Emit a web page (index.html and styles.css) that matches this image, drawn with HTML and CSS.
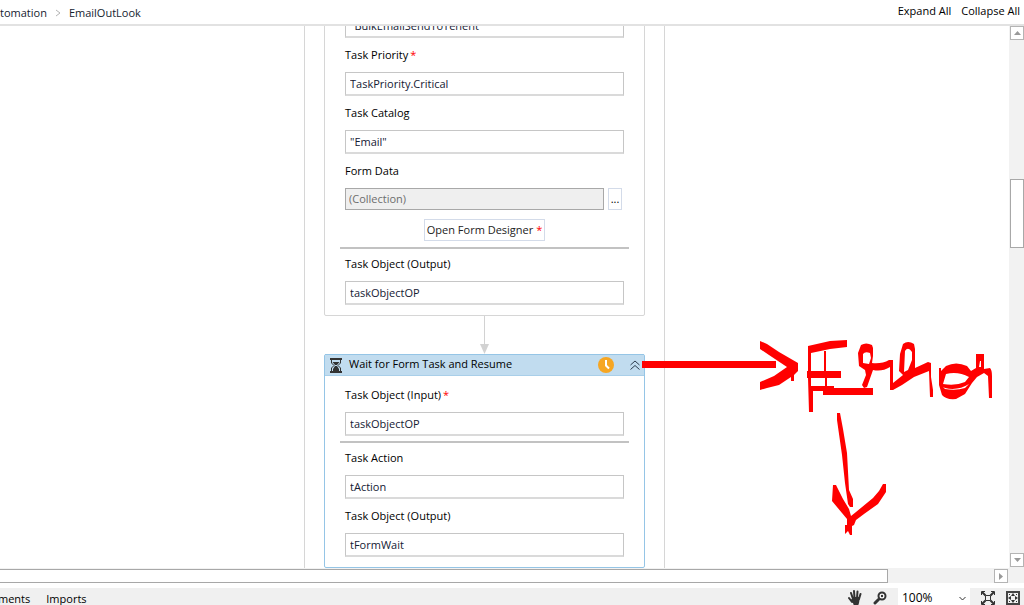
FILE: index.html
```
<!DOCTYPE html>
<html lang="en">
<head>
    <meta charset="UTF-8">
    <meta name="viewport" content="width=device-width, initial-scale=1.0">
    <title>EmailOutLook</title>
    <link rel="stylesheet" href="styles.css">
</head>
<body>
<header class="topbar">
    <nav class="breadcrumb">
        <a href="#">tomation</a>
        <svg class="crumb-arrow" width="6" height="8" viewBox="0 0 6 8"><path d="M1 1l4 3-4 3"/></svg>
        <a href="#">EmailOutLook</a>
    </nav>
    <div class="topbar-actions">
        <button type="button">Expand All</button>
        <button type="button">Collapse All</button>
    </div>
</header>

<div class="designer">
    <main class="canvas">
        <div class="sequence">
            <!-- Create form task -->
            <section class="activity activity-create">
                <div class="field">
                    <input type="text" aria-label="Task Title" value="&quot;BulkEmailSendToTenent&quot;">
                </div>
                <div class="field">
                    <label for="taskPriority">Task Priority<span class="required">*</span></label>
                    <input type="text" id="taskPriority" value="TaskPriority.Critical">
                </div>
                <div class="field">
                    <label for="taskCatalog">Task Catalog</label>
                    <input type="text" id="taskCatalog" value="&quot;Email&quot;">
                </div>
                <div class="field">
                    <label for="formData">Form Data</label>
                    <div class="browse-row">
                        <input type="text" id="formData" class="collection" value="(Collection)" disabled>
                        <button type="button" class="btn btn-browse">...</button>
                    </div>
                </div>
                <button type="button" class="btn btn-designer">Open Form Designer <span class="required">*</span></button>
                <hr>
                <div class="field">
                    <label for="createOutput">Task Object (Output)</label>
                    <input type="text" id="createOutput" value="taskObjectOP">
                </div>
            </section>

            <svg class="connector" width="11" height="38" viewBox="0 0 11 38">
                <path d="M5 0h1v29H5z"/>
                <path d="M1 28h9L5.500 38z"/>
            </svg>

            <!-- Wait for form task -->
            <section class="activity activity-selected">
                <div class="activity-header">
                    <svg width="12" height="15" viewBox="0 0 12 15">
                        <path fill="#333" d="M0 0h12v2H0zM0 13h12v2H0z"/>
                        <path fill="none" stroke="#333" d="M1.500 2v3L4 7.500 1.500 10v3M10.500 2v3L8 7.500l2.500 2.500v3"/>
                        <path fill="#333" d="M2.500 4h7L7 7H5zM5 8h2l2 3v2H3v-2z"/>
                    </svg>
                    <h2>Wait for Form Task and Resume</h2>
                    <svg class="clock" width="16" height="16" viewBox="0 0 16 16">
                        <circle cx="8" cy="8" r="8" fill="#f6a623"/>
                        <path fill="none" stroke="#fff" stroke-width="2" d="M8 3v5.500l3 3"/>
                    </svg>
                    <button type="button" class="collapse" aria-label="Collapse">
                        <svg width="10" height="10" viewBox="0 0 10 10"><path d="M.5 5L5 1l4.500 4M.5 9.500L5 5.500l4.500 4"/></svg>
                    </button>
                </div>
                <div class="field first">
                    <label for="waitInput">Task Object (Input)<span class="required">*</span></label>
                    <input type="text" id="waitInput" value="taskObjectOP">
                </div>
                <hr>
                <div class="field">
                    <label for="taskAction">Task Action</label>
                    <input type="text" id="taskAction" value="tAction">
                </div>
                <div class="field">
                    <label for="waitOutput">Task Object (Output)</label>
                    <input type="text" id="waitOutput" value="tFormWait">
                </div>
            </section>

            <!-- Freehand pen marks -->
            <svg class="ink" width="358" height="200" viewBox="642 340 358 200">
                <path d="M642 361h134v7H642z"/>
                <path d="M760 341L767 344L779 352L798 363V371L794 375V381H791V377L779 385L767 388L760 390V382L774 376L787 367L769 355L760 349z"/>
                <!-- E -->
                <path d="M808 346L830 341L847 340V347L830 349L811 353V371H824V351H826V371H841V378H827V386H834V388H873V395H823V391H813V412H809L808 378H807V371H808zM811 378V386H825V378z"/>
                <!-- r -->
                <path fill-rule="evenodd" d="M861 345Q866 342 872 345L873 348V356L872 363Q882 364 889 360H893V383L903 375L899 371L900 354L903 344Q908 340 914 344L915 349V368L928 362L931 363V377L933 390V397H930L929 371L914 377L902 385L893 390H890V367Q882 372 873 370L867 387L864 388L862 385L866 375L865 370L859 366L858 353zM863 354L863 363L869 364L871 358L870 353Q865 351 863 354zM905 351L904 372L908 370L912 360V352Q908 346 905 351z"/>
                <!-- o -->
                <path fill-rule="evenodd" d="M939 368H941V371L946 366Q956 361 967 366L971 371L976 368V354H984V369L990 368Q992 370 992 376V398H989L988 376L984 373L977 377L972 383L965 394L956 399Q946 400 942 395L939 385zM946 374L943 384Q956 386 965 382L969 377Q958 371 946 374zM980 361L979 367H981V361zM943 387L945 388Q958 391 969 384L965 388Q956 391 945 389z"/>
                <!-- Down arrow -->
                <path d="M837 413H840L843 429L847 453L849 490L853 499V507H850L848 504L845 483L842 455L837 420z"/>
                <path d="M833 485H836L843 499L849 509L851 516L856 512L873 498L879 491L883 484H886V492L878 504L864 514L856 520L854 525L852 526V535H850L848 531L845 534V525H847V519L842 513L832 501z"/>
            </svg>
        </div>
    </main>

    <div class="scrollbar vertical">
        <button type="button" aria-label="Scroll up"><svg width="7" height="4" viewBox="0 0 7 4"><path d="M0 4h7L3.500 0z"/></svg></button>
        <div class="track"><div class="thumb"></div></div>
        <button type="button" aria-label="Scroll down"><svg width="7" height="4" viewBox="0 0 7 4"><path d="M0 0h7L3.500 4z"/></svg></button>
    </div>
</div>

<div class="scrollbar horizontal">
    <div class="track"><div class="thumb"></div></div>
    <button type="button" aria-label="Scroll right"><svg width="4" height="7" viewBox="0 0 4 7"><path d="M0 0v7l4-3.500z"/></svg></button>
</div>

<footer class="statusbar">
    <div class="tabs">
        <button type="button">ments</button>
        <button type="button">Imports</button>
    </div>
    <div class="zoom-tools">
        <button type="button" aria-label="Pan">
            <svg width="14" height="16" viewBox="0 0 14 16">
                <path fill="none" stroke="#333" stroke-width="2" stroke-linecap="round" d="M3 3l2 6M6 1l.5 7M9.500 1.500L9 8M12.500 4L11 9M1 8l3 4"/>
                <path fill="#333" d="M4 7h8l-1 6-1 3H6l-1-3-3-3 2-1z"/>
            </svg>
        </button>
        <button type="button" aria-label="Zoom">
            <svg width="14" height="14" viewBox="0 0 14 14">
                <circle cx="9" cy="5" r="3.500" fill="#fff" stroke="#333" stroke-width="2"/>
                <circle cx="9" cy="5" r="1.200" fill="#333"/>
                <path stroke="#333" stroke-width="3" stroke-linecap="round" d="M5.500 8.500L2 12"/>
            </svg>
        </button>
        <div class="zoom-select">
            <select aria-label="Zoom level">
                <option>100%</option>
            </select>
            <svg width="7" height="5" viewBox="0 0 7 5"><path fill="none" stroke="#333" d="M.5 1l3 3 3-3"/></svg>
        </div>
        <button type="button" aria-label="Fit to screen">
            <svg width="14" height="14" viewBox="0 0 14 14">
                <path fill="none" stroke="#333" d="M.5 4V.500H4M10 .500h3.500V4M13.500 10v3.500H10M4 13.500H.5V10"/>
                <path fill="none" stroke="#333" stroke-width="2" d="M1 1l3.500 3.500M13 1L9.500 4.500M13 13L9.500 9.500M1 13l3.500-3.500"/>
                <path fill="none" stroke="#333" d="M4.500 4.500h5v5h-5z"/>
            </svg>
        </button>
        <button type="button" aria-label="Overview">
            <svg width="14" height="14" viewBox="0 0 14 14">
                <path fill="none" stroke="#444" stroke-width="2" d="M1 1h12v12H1z"/>
                <path fill="#333" d="M7 2l2 3H5zM7 12l2-3H5zM2 7l3-2v4zM12 7L9 5v4zM3 3h1v1H3zM10 3h1v1h-1zM3 10h1v1H3zM10 10h1v1h-1z"/>
            </svg>
        </button>
    </div>
</footer>
</body>
</html>
```
FILE: styles.css
```
* {
    box-sizing: border-box;
}
body {
    display: flex;
    flex-direction: column;
    height: 100vh;
    margin: 0;
    overflow: hidden;
    background: #fff;
    color: #000;
    font-family: "Open Sans", "Noto Sans", sans-serif;
    font-size: 11px;
    line-height: 18px;
}
button, input, select {
    font: inherit;
    color: inherit;
}
button {
    border: none;
    padding: 0;
    background: none;
}
svg {
    display: block;
    flex: none;
}

/* Top bar */
.topbar {
    display: flex;
    flex: none;
    justify-content: space-between;
    padding: 2px 4px 2px 0;
    border-bottom: 2px solid #e2e2e2;
}
.breadcrumb {
    display: flex;
    align-items: center;
    gap: 8px;
    padding-top: 2px;
}
.breadcrumb a {
    color: #14222f;
    text-decoration: none;
}
.crumb-arrow {
    fill: none;
    stroke: #b4b4b4;
}
.topbar-actions {
    display: flex;
    align-items: flex-start;
    gap: 10px;
}

/* Designer canvas */
.designer {
    display: flex;
    flex: 1;
    min-height: 0;
}
.canvas {
    display: flex;
    flex: 1;
    justify-content: center;
    align-items: flex-end;
    padding-right: 40px;
    overflow: hidden;
}
.sequence {
    position: relative;
    flex: none;
    width: 361px;
    padding: 20px 19px 0;
    border: 1px solid #d6d6d6;
    border-width: 0 1px;
}
.activity {
    display: flex;
    flex-direction: column;
    padding: 0 15px 10px;
    border: 1px solid #d6d6d6;
    border-radius: 2px;
}
.activity-create {
    padding-top: 20px;
}
.activity-selected {
    border-color: #95c5e6;
}
.activity-header {
    display: flex;
    align-items: center;
    height: 22px;
    margin: -1px -15px 0;
    padding: 0 4px 0 5px;
    border-top: 1px solid #95c5e6;
    border-bottom: 1px solid #a9cfe9;
    background: #c1dcef;
}
.activity-header h2 {
    flex: 1;
    margin: 0 0 0 7px;
    padding-bottom: 2px;
    font-size: 11px;
    font-weight: normal;
}
.clock {
    margin-right: 16px;
}
.collapse svg {
    fill: none;
    stroke: #2c3c4c;
}
.connector {
    margin: 0 auto;
    fill: #d2d2d2;
}

/* Fields */
.field {
    display: flex;
    flex-direction: column;
    padding: 0 5px;
}
.field label {
    padding: 8px 0;
}
.field.first label {
    padding-top: 10px;
}
hr + .field label {
    padding-top: 6px;
}
.field input {
    width: 100%;
    height: 24px;
    padding: 0 4px;
    border: 1px solid #c6c6c6;
    border-bottom: 2px solid #dadada;
    background: #fff;
    color: #142033;
}
.field .collection {
    flex: 1;
    min-width: 0;
    height: 22px;
    padding: 0 3px 2px;
    border: 1px solid #a8a8a8;
    background: #efefef;
    color: #6d6d6d;
}
.required {
    margin-left: 2px;
    color: #f00;
}
.browse-row {
    display: flex;
    gap: 4px;
    padding-right: 2px;
}
.btn {
    border: 1px solid #d3dbe9;
    background: #fff;
}
.btn-browse {
    width: 14px;
    height: 22px;
}
.btn-designer {
    align-self: center;
    height: 22px;
    margin: 9px 0 1px;
    padding: 0 2px;
    color: #222;
}
.btn-designer .required {
    margin-left: 0;
}
hr {
    width: 100%;
    height: 2px;
    margin: 5px 0 0;
    border: none;
    background: #c2c2c2;
}

/* Pen marks over the canvas */
.ink {
    position: absolute;
    left: 337px;
    bottom: 28px;
    overflow: visible;
    pointer-events: none;
    fill: #f00;
}

/* Scrollbars */
.scrollbar {
    display: flex;
    flex: none;
    background: #f2f2f2;
}
.scrollbar button {
    display: flex;
    flex: none;
    align-items: center;
    justify-content: center;
    width: 14px;
    height: 14px;
    border: 1px solid #b4b4b4;
    background: #fff;
}
.scrollbar svg {
    fill: #999;
}
.track {
    display: flex;
    flex: 1;
}
.thumb {
    border: 1px solid #a8a8a8;
    background: #fff;
}
.vertical {
    flex-direction: column;
    width: 15px;
    padding: 0 0 1px 1px;
}
.vertical .track {
    flex-direction: column;
}
.vertical .track::before {
    content: "";
    flex: 0 0 27%;
}
.vertical .thumb {
    height: 69px;
}
.horizontal {
    height: 15px;
    padding: 1px 16px 0 0;
}
.horizontal .thumb {
    flex: 0 0 auto;
    width: calc(89% + 4px);
    margin-left: -1px;
}

/* Status bar */
.statusbar {
    display: flex;
    flex: none;
    justify-content: space-between;
    height: 17px;
    margin-top: 5px;
    overflow: hidden;
    background: #f0f0f0;
}
.tabs {
    display: flex;
    gap: 16px;
    height: 20px;
    margin-left: -2px;
    padding-top: 1px;
}
.zoom-tools {
    display: flex;
    align-items: center;
    gap: 11px;
    height: 20px;
    padding-right: 4px;
}
.zoom-select {
    display: flex;
    align-items: center;
    width: 72px;
    height: 20px;
    padding-right: 4px;
    background: #fff;
}
.zoom-select select {
    flex: 1;
    padding: 0 0 0 4px;
    border: none;
    background: none;
    appearance: none;
    font-size: 12px;
}
```
